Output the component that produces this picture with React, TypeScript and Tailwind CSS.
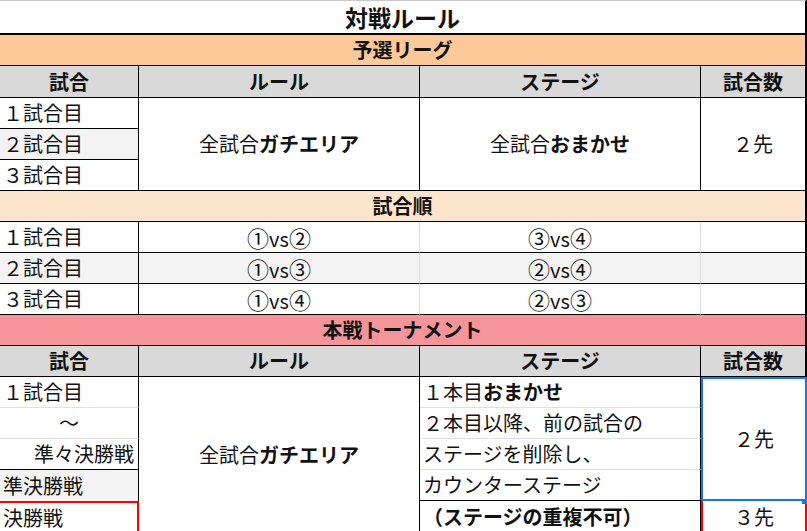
const cell = 'flex items-center border-b border-r border-black'
const head = 'flex items-center justify-center border-b border-r border-black bg-[#d9d9d9] font-bold'
const section = 'col-span-4 flex items-center justify-center border-b border-r-2 border-black font-bold'

function HeaderRow() {
  return (
    <>
      <div className={head}>試合</div>
      <div className={head}>ルール</div>
      <div className={head}>ステージ</div>
      <div className={`${head} border-r-2`}>試合数</div>
    </>
  )
}

// circled digits render a bit small in Noto, bump them up
function Match({ a, b }: { a: string; b: string }) {
  return (
    <span>
      <span className="text-[22px]">{a}</span>vs<span className="text-[22px]">{b}</span>
    </span>
  )
}

const ORDER = [
  { game: '１試合目', a: ['①', '②'], b: ['③', '④'] },
  { game: '２試合目', a: ['①', '③'], b: ['②', '④'] },
  { game: '３試合目', a: ['①', '④'], b: ['②', '③'] },
]

export default function App() {
  return (
    <div className="h-[531px] w-[807px] overflow-hidden bg-white font-['Noto_Sans_CJK_JP',sans-serif] text-[20px] leading-none text-[#111]">
      <div className="grid grid-cols-[139px_281px_281px_106px] grid-rows-[35px_31px_32px_repeat(14,31px)]">
        {/* title */}
        <div className="col-span-4 flex items-center justify-center border-t border-b-2 border-r-2 border-black border-t-[#c8c8c8] text-[23px] font-bold">
          対戦ルール
        </div>

        {/* 予選リーグ */}
        <div className={`${section} bg-[#fdc998]`}>予選リーグ</div>
        <HeaderRow />
        <div className={`${cell} pl-[3px]`}>１試合目</div>
        <div className={`${cell} row-span-3 justify-center`}>
          全試合<span className="font-bold">ガチエリア</span>
        </div>
        <div className={`${cell} row-span-3 justify-center`}>
          全試合<span className="font-bold">おまかせ</span>
        </div>
        <div className={`${cell} row-span-3 justify-center border-r-2`}>２先</div>
        <div className={`${cell} bg-[#f3f3f3] pl-[3px]`}>２試合目</div>
        <div className={`${cell} pl-[3px]`}>３試合目</div>

        {/* 試合順 */}
        <div className={`${section} bg-[#fde4cc]`}>試合順</div>
        {ORDER.map((r, i) => (
          <div key={r.game} className={i === 1 ? 'contents [&>div]:bg-[#f3f3f3]' : 'contents'}>
            <div className={`${cell} pl-[3px]`}>{r.game}</div>
            <div className={`${cell} justify-center border-r-[#dedede]`}>
              <Match a={r.a[0]} b={r.a[1]} />
            </div>
            <div className={`${cell} justify-center border-r-[#dedede]`}>
              <Match a={r.b[0]} b={r.b[1]} />
            </div>
            <div className={`${cell} border-r-2`}></div>
          </div>
        ))}

        {/* 本戦トーナメント */}
        <div className={`${section} bg-[#f59499]`}>本戦トーナメント</div>
        <HeaderRow />

        <div className={`${cell} border-b-[#e0e0e0] pl-[3px]`}>１試合目</div>
        <div className={`${cell} row-span-5 justify-center border-b-0`}>
          全試合<span className="font-bold">ガチエリア</span>
        </div>
        <div className={`${cell} border-b-[#e0e0e0] pl-[3px]`}>
          １本目<span className="font-bold">おまかせ</span>
        </div>
        <div className="relative row-span-4 flex items-center justify-center border-2 border-[#1a73e8]">
          ２先
          <span className="absolute -bottom-[5px] -right-[2px] h-[5px] w-[5px] bg-[#1a73e8]" />
        </div>

        <div className={`${cell} justify-center border-b-[#e0e0e0]`}>～</div>
        <div className={`${cell} border-b-[#e0e0e0] pl-[3px]`}>２本目以降、前の試合の</div>

        <div className={`${cell} justify-end pr-[4px]`}>準々決勝戦</div>
        <div className={`${cell} border-b-[#e0e0e0] pl-[3px]`}>ステージを削除し、</div>

        <div className="flex items-center border-r border-black bg-[#f3f3f3] pl-[3px]">準決勝戦</div>
        <div className={`${cell} pl-[3px]`}>カウンターステージ</div>

        <div className="flex items-center border-t-2 border-r-2 border-[#ff0000] pl-[3px]">決勝戦</div>
        <div className="flex items-center border-r border-black pl-[3px] font-bold">（ステージの重複不可）</div>
        <div className="flex items-center justify-center border-x-2 border-[#ff0000]">３先</div>
      </div>
    </div>
  )
}
